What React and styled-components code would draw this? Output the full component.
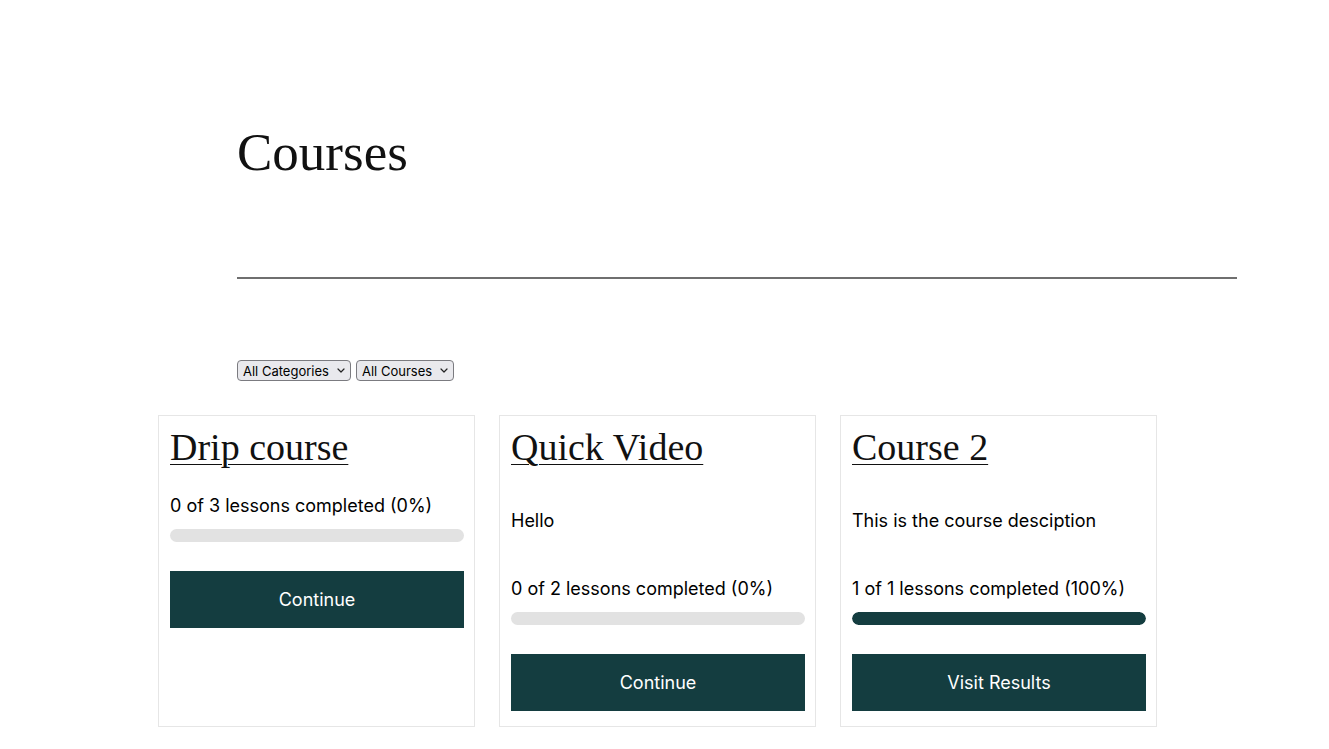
import React from 'react'
import styled, { createGlobalStyle } from 'styled-components'

const courses = [
  { title: 'Drip course', done: 0, total: 3, button: 'Continue' },
  { title: 'Quick Video', description: 'Hello', done: 0, total: 2, button: 'Continue' },
  { title: 'Course 2', description: 'This is the course desciption', done: 1, total: 1, button: 'Visit Results' },
]

const App = () => {
  return (
    <>
      <GlobalStyle />
      <Page>
        <Header>
          <PageTitle>Courses</PageTitle>
          <Rule />
          <Filters>
            <SelectBox>
              <Select defaultValue="all" width={114}>
                <option value="all">All Categories</option>
              </Select>
              <Chevron />
            </SelectBox>
            <SelectBox>
              <Select defaultValue="all" width={98}>
                <option value="all">All Courses</option>
              </Select>
              <Chevron />
            </SelectBox>
          </Filters>
        </Header>
        <Grid>
          {courses.map((c) => {
            const pct = Math.round((c.done / c.total) * 100)
            return (
              <Card key={c.title}>
                <CardTitle href="#">{c.title}</CardTitle>
                {c.description && <Description>{c.description}</Description>}
                <ProgressText>
                  {c.done} of {c.total} lessons completed ({pct}%)
                </ProgressText>
                <Track>
                  <Fill style={{ width: `${pct}%` }} />
                </Track>
                <Button>{c.button}</Button>
              </Card>
            )
          })}
        </Grid>
      </Page>
    </>
  )
}

const Chevron = () => (
  <ChevronIcon viewBox="0 0 8 5" width="8" height="5">
    <path d="M1 1l3 3 3-3" fill="none" stroke="#222" strokeWidth="1.2" strokeLinecap="round" strokeLinejoin="round" />
  </ChevronIcon>
)

const GlobalStyle = createGlobalStyle`
  html, body {
    margin: 0;
    padding: 0;
    background: #ffffff;
  }
  body {
    font-family: Inter, "Liberation Sans", sans-serif;
    color: #000;
  }
`

const Page = styled.div`
  padding-top: 120px;
  padding-bottom: 40px;
`

const Header = styled.div`
  margin-left: 237px;
  width: 1000px;
`

const PageTitle = styled.h1`
  margin: 0;
  font-family: "Liberation Serif", "DejaVu Serif", serif;
  font-weight: 300;
  font-size: 53px;
  line-height: 64px;
  color: #111;
`

const Rule = styled.div`
  margin-top: 93px;
  height: 2px;
  background: #6f6f6f;
`

const Filters = styled.div`
  display: flex;
  gap: 5px;
  margin-top: 81px;
`

const SelectBox = styled.div`
  position: relative;
  display: inline-flex;
`

const Select = styled.select`
  appearance: none;
  -webkit-appearance: none;
  width: ${(p) => p.width}px;
  height: 21px;
  padding: 0 0 0 5px;
  margin: 0;
  border: 1px solid #7b7b80;
  border-radius: 4px;
  background: #e9e9ed;
  font-family: Inter, "Liberation Sans", sans-serif;
  font-size: 13px;
  color: #000;
  outline: none;
`

const ChevronIcon = styled.svg`
  position: absolute;
  right: 6px;
  top: 8px;
  pointer-events: none;
`

const Grid = styled.div`
  display: grid;
  grid-template-columns: repeat(3, 317px);
  gap: 24px;
  margin-left: 158px;
  margin-top: 34px;
`

const Card = styled.div`
  display: flex;
  flex-direction: column;
  box-sizing: border-box;
  border: 1px solid #e6e6e6;
  padding: 11px 10px 15px 11px;
`

const CardTitle = styled.a`
  font-family: "Liberation Serif", "DejaVu Serif", serif;
  font-weight: 300;
  font-size: 38px;
  line-height: 1.1;
  color: #111;
  text-decoration: underline;
  text-decoration-thickness: 1px;
  text-underline-offset: 4px;
  align-self: flex-start;
  margin-bottom: 23px;
`

const Description = styled.p`
  margin: 15px 0 41px;
  font-size: 18px;
  line-height: 27px;
`

const ProgressText = styled.p`
  margin: 0;
  font-size: 18px;
  line-height: 27px;
`

const Track = styled.div`
  margin-top: 10px;
  height: 13px;
  border-radius: 7px;
  background: #e2e2e2;
  overflow: hidden;
`

const Fill = styled.div`
  height: 100%;
  background: #143d40;
  border-radius: 7px;
`

const Button = styled.button`
  margin-top: 29px;
  height: 57px;
  border: none;
  background: #143d40;
  color: #ffffff;
  font-family: Inter, "Liberation Sans", sans-serif;
  font-size: 18px;
  cursor: pointer;
`

export default App
